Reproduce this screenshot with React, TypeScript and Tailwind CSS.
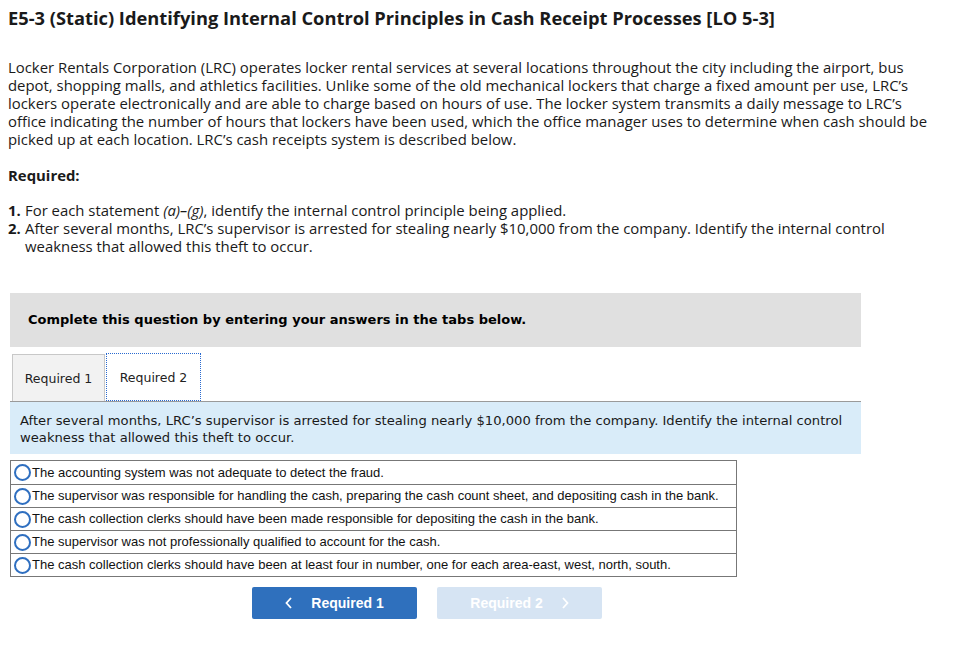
import { useState } from "react";

const options = [
  "The accounting system was not adequate to detect the fraud.",
  "The supervisor was responsible for handling the cash, preparing the cash count sheet, and depositing cash in the bank.",
  "The cash collection clerks should have been made responsible for depositing the cash in the bank.",
  "The supervisor was not professionally qualified to account for the cash.",
  "The cash collection clerks should have been at least four in number, one for each area-east, west, north, south.",
];

export default function App() {
  const [picked, setPicked] = useState<number | null>(null);

  return (
    <div className="min-h-[649px] bg-white px-2 pt-[6px] text-[#1a1a1a]">
      <h1 className="font-['Open_Sans',sans-serif] text-[18.3px] font-bold leading-6 text-[#1a1a1a]">
        E5-3 (Static) Identifying Internal Control Principles in Cash Receipt Processes [LO 5-3]
      </h1>

      <p className="mt-[28px] max-w-[928px] font-['Open_Sans',sans-serif] text-[14.9px] leading-[18px]">
        Locker Rentals Corporation (LRC) operates locker rental services at several locations throughout the city including the airport, bus
        depot, shopping malls, and athletics facilities. Unlike some of the old mechanical lockers that charge a fixed amount per use, LRC’s
        lockers operate electronically and are able to charge based on hours of use. The locker system transmits a daily message to LRC’s
        office indicating the number of hours that lockers have been used, which the office manager uses to determine when cash should be
        picked up at each location. LRC’s cash receipts system is described below.
      </p>

      <p className="mt-[18px] font-['Open_Sans',sans-serif] text-[14.9px] font-bold leading-[18px]">Required:</p>

      <ol className="mt-[17px] font-['Open_Sans',sans-serif] text-[14.9px] leading-[18px]">
        <li className="flex">
          <span className="w-[17px] shrink-0 font-bold">1.</span>
          <span>
            For each statement <i>(a)–(g)</i>, identify the internal control principle being applied.
          </span>
        </li>
        <li className="flex">
          <span className="w-[17px] shrink-0 font-bold">2.</span>
          <span className="max-w-[885px]">
            After several months, LRC’s supervisor is arrested for stealing nearly $10,000 from the company. Identify the internal control
            weakness that allowed this theft to occur.
          </span>
        </li>
      </ol>

      <div className="mt-[38px] ml-[2px] w-[851px] font-['DejaVu_Sans',Verdana,sans-serif]">
        <div className="flex h-[54px] items-center bg-[#e0e0e0] px-[18px]">
          <span className="text-[13px] font-bold text-black">Complete this question by entering your answers in the tabs below.</span>
        </div>

        <div className="mt-[6px] flex items-end pl-[2px] text-[12.5px] text-[#222]">
          <button className="h-[47px] w-[93px] border border-b-0 border-[#c8c8c8] bg-[#f2f2f2] pt-[2px]">Required 1</button>
          <button className="ml-[1px] h-[48px] w-[95px] border border-dotted border-[#2a6ad0] bg-white pt-[2px]">Required 2</button>
        </div>

        <div className="border-t border-[#9a9a9a] bg-[#d9ecf9] px-[10px] pb-[8px] pt-[10px] text-[13.15px] leading-[17px] text-[#1a1a1a]">
          After several months, LRC’s supervisor is arrested for stealing nearly $10,000 from the company. Identify the internal control
          weakness that allowed this theft to occur.
        </div>

        <div className="mt-[6px] w-[727px] border border-[#777] font-['Liberation_Sans',Arial,sans-serif] text-[13px] text-[#111]">
          {options.map((text, i) => (
            <label
              key={i}
              className={`flex h-[23px] cursor-pointer items-center gap-[1px] pl-[3px] ${i > 0 ? "border-t border-[#777]" : ""}`}
              onClick={() => setPicked(i)}
            >
              <span className="flex h-[17px] w-[17px] shrink-0 items-center justify-center rounded-full border-2 border-[#2f6fc0]">
                {picked === i && <span className="h-[7px] w-[7px] rounded-full bg-[#2f6fc0]" />}
              </span>
              <span>{text}</span>
            </label>
          ))}
        </div>

        <div className="mt-[10px] flex gap-5 pl-[242px] font-['Liberation_Sans',Arial,sans-serif] text-[14px] font-bold text-white">
          <button className="flex h-[32px] w-[165px] items-center justify-center gap-[18px] rounded-[2px] bg-[#2f70bd]">
            <svg width="8" height="12" viewBox="0 0 8 12" fill="none" stroke="white" strokeWidth="1.8">
              <path d="M6 1L1.5 6L6 11" />
            </svg>
            Required 1
          </button>
          <button className="flex h-[32px] w-[165px] items-center justify-center gap-[18px] rounded-[2px] bg-[#d6e4f3] text-white">
            Required 2
            <svg width="8" height="12" viewBox="0 0 8 12" fill="none" stroke="white" strokeWidth="1.8">
              <path d="M2 1L6.5 6L2 11" />
            </svg>
          </button>
        </div>
      </div>
    </div>
  );
}
